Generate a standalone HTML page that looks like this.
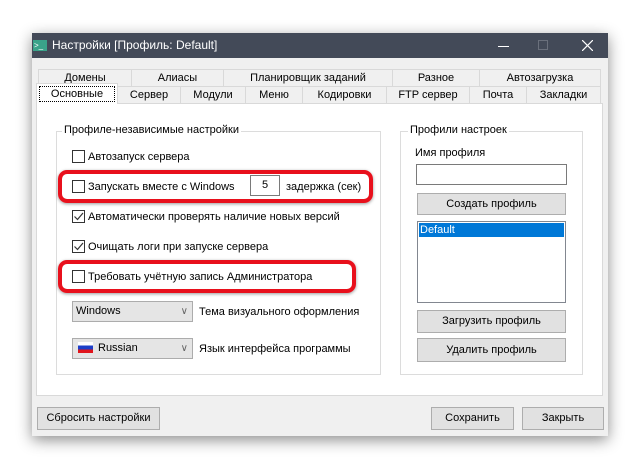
<!DOCTYPE html>
<html><head><meta charset="utf-8"><style>
*{box-sizing:border-box;margin:0;padding:0}
body{width:640px;height:468px;background:#fff;font-family:"Liberation Sans","DejaVu Sans",sans-serif;font-size:11px;color:#000;position:relative;overflow:hidden}
.a{position:absolute}
.win{left:32px;top:33px;width:576px;height:403px;background:#f0f0f0;box-shadow:0 4px 14px rgba(0,0,0,.45)}
.title{left:32px;top:33px;width:576px;height:25px;background:#434a58;color:#fff;font-size:12px}
.tab{position:absolute;border:1px solid #d9d9d9;border-bottom:none;background:#f0f0f0;text-align:center;line-height:17px;height:18px}
.btn{position:absolute;background:#e1e1e1;border:1px solid #adadad;text-align:center}
.cb{position:absolute;width:13px;height:13px;border:1px solid #333;background:#fff}
.lbl{position:absolute;white-space:nowrap;line-height:14px}
.red{position:absolute;border:4px solid #e8101c;border-radius:9px;box-shadow:0 1px 3px rgba(0,0,0,.4)}
.grp{position:absolute;border:1px solid #dcdcdc}
.gt{position:absolute;background:#fff;padding:0 2px;white-space:nowrap}
.dd{position:absolute;background:#e5e5e5;border:1px solid #acacac;line-height:19px;padding-left:3px}
</style></head><body>
<div class="a win"></div>
<div class="a title">
 <div class="a" style="left:1px;top:7px;width:14px;height:11px;background:#3aa38a;color:#fff;font-size:8px;line-height:11px;padding-left:1px">&gt;_</div>
 <div class="a" style="left:20px;top:5px">Настройки [Профиль: Default]</div>
 <div class="a" style="left:466px;top:13px;width:11px;height:1px;background:#fff"></div>
 <div class="a" style="left:506px;top:7px;width:10px;height:10px;border:1px solid #6a707c"></div>
 <svg class="a" style="left:550px;top:7px" width="11" height="11"><path d="M0 0L11 11M11 0L0 11" stroke="#fff" stroke-width="1.2"/></svg>
</div>
<div class="tab" style="left:38px;top:69px;width:94px">Домены</div>
<div class="tab" style="left:131px;top:69px;width:93px">Алиасы</div>
<div class="tab" style="left:223px;top:69px;width:170px">Планировщик заданий</div>
<div class="tab" style="left:392px;top:69px;width:88px">Разное</div>
<div class="tab" style="left:479px;top:69px;width:122px">Автозагрузка</div>
<div class="tab" style="left:117px;top:86px;width:64px">Сервер</div>
<div class="tab" style="left:180px;top:86px;width:66px">Модули</div>
<div class="tab" style="left:245px;top:86px;width:58px">Меню</div>
<div class="tab" style="left:302px;top:86px;width:85px">Кодировки</div>
<div class="tab" style="left:386px;top:86px;width:84px">FTP сервер</div>
<div class="tab" style="left:469px;top:86px;width:58px">Почта</div>
<div class="tab" style="left:526px;top:86px;width:75px">Закладки</div>
<div class="a" style="left:36px;top:103px;width:567px;height:293px;background:#fff;border:1px solid #d9d9d9"></div>
<div class="tab" style="left:36px;top:83px;width:82px;height:21px;background:#fff;border-color:#d9d9d9"><div style="margin:2px;border:1px dotted #000;height:16px;line-height:14px">Основные</div></div>
<div class="grp" style="left:56px;top:131px;width:325px;height:244px"></div>
<div class="gt" style="left:62px;top:124px">Профиле-независимые настройки</div>
<div class="cb" style="left:72px;top:150px"></div><div class="lbl" style="left:88px;top:150px">Автозапуск сервера</div>
<div class="cb" style="left:72px;top:180px"></div><div class="lbl" style="left:88px;top:180px">Запускать вместе с Windows</div>
<div class="a" style="left:250px;top:175px;width:30px;height:21px;border:1px solid #7a7a7a;background:#fff;text-align:center;line-height:19px">5</div>
<div class="lbl" style="left:286px;top:180px">задержка (сек)</div>
<div class="cb" style="left:72px;top:210px"><svg width="11" height="11" style="display:block"><path d="M1.5 5.5L4.5 8.5L10 2" stroke="#333" fill="none" stroke-width="1.2"/></svg></div><div class="lbl" style="left:88px;top:210px">Автоматически проверять наличие новых версий</div>
<div class="cb" style="left:72px;top:240px"><svg width="11" height="11" style="display:block"><path d="M1.5 5.5L4.5 8.5L10 2" stroke="#333" fill="none" stroke-width="1.2"/></svg></div><div class="lbl" style="left:88px;top:240px">Очищать логи при запуске сервера</div>
<div class="cb" style="left:72px;top:270px"></div><div class="lbl" style="left:88px;top:270px">Требовать учётную запись Администратора</div>
<div class="red" style="left:58px;top:170px;width:315px;height:33px"></div>
<div class="red" style="left:58px;top:260px;width:298px;height:33px"></div>
<div class="dd" style="left:72px;top:301px;width:121px;height:21px">Windows<span class="a" style="right:4px;top:0;color:#666;font-size:10px">&#8744;</span></div>
<div class="lbl" style="left:199px;top:305px">Тема визуального оформления</div>
<div class="dd" style="left:72px;top:338px;width:121px;height:21px"><span style="display:inline-block;vertical-align:middle;width:15px;height:11px;background:linear-gradient(#fff 33%,#1c3fc8 33%,#1c3fc8 66%,#e0141c 66%);margin:0 5px 2px 2px"></span>Russian<span class="a" style="right:4px;top:0;color:#666;font-size:10px">&#8744;</span></div>
<div class="lbl" style="left:199px;top:342px">Язык интерфейса программы</div>
<div class="grp" style="left:400px;top:131px;width:183px;height:244px"></div>
<div class="gt" style="left:408px;top:124px">Профили настроек</div>
<div class="lbl" style="left:415px;top:146px">Имя профиля</div>
<div class="a" style="left:416px;top:164px;width:151px;height:21px;border:1px solid #7a7a7a;background:#fff"></div>
<div class="btn" style="left:417px;top:193px;width:149px;height:22px;line-height:20px">Создать профиль</div>
<div class="a" style="left:417px;top:221px;width:149px;height:82px;border:1px solid #828790;background:#fff"><div style="margin:1px;background:#0078d7;color:#fff;height:14px;line-height:14px;padding-left:1px">Default</div></div>
<div class="btn" style="left:417px;top:310px;width:149px;height:23px;line-height:21px">Загрузить профиль</div>
<div class="btn" style="left:417px;top:338px;width:149px;height:24px;line-height:22px">Удалить профиль</div>
<div class="btn" style="left:37px;top:407px;width:123px;height:23px;line-height:21px">Сбросить настройки</div>
<div class="btn" style="left:431px;top:407px;width:83px;height:23px;line-height:21px">Сохранить</div>
<div class="btn" style="left:522px;top:407px;width:82px;height:23px;line-height:21px">Закрыть</div>
</body></html>
